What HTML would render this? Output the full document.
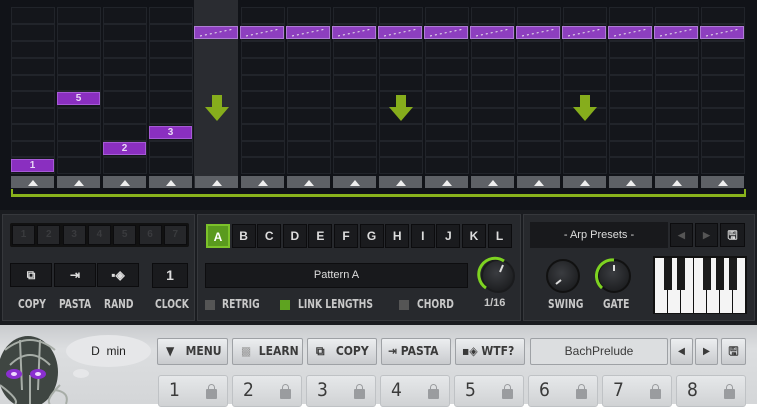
<!DOCTYPE html>
<html><head><meta charset="utf-8">
<style>
*{margin:0;padding:0;box-sizing:border-box}
body{width:768px;height:404px;overflow:hidden;background:#fff;position:relative;font-family:"Liberation Sans",sans-serif}
.a{position:absolute}
#top{left:0;top:0;width:757px;height:210px;background:#111318}
.cell{position:absolute;background:#14161b;border:1px solid #21242a}
.note{position:absolute;background:#8a2fc0;border:1px solid #a65ad6;color:#e8d8f5;font-size:10px;font-weight:bold;text-align:center;line-height:11px}
.step{position:absolute;background:#5e6166;height:12px;top:176px}
.step:after{content:"";position:absolute;left:50%;top:4px;margin-left:-5px;border-left:5px solid transparent;border-right:5px solid transparent;border-bottom:6px solid #eee}
.arrow{position:absolute;width:26px;height:26px}
#bot{left:0;top:210px;width:757px;height:115px;background:#1a1c20}
.pan{position:absolute;top:4px;height:107px;background:#27292d;border:1px solid #36383c}
.btn{position:absolute;background:#1a1b1e;border:1px solid #0c0c0e;color:#ddd;font-size:12px;font-weight:bold;text-align:center}
.lbl{position:absolute;color:#c8c8c8;font-size:12px;font-weight:bold;font-family:"DejaVu Sans Condensed","Liberation Sans",sans-serif;transform:scaleX(.85);transform-origin:left}
.chk{position:absolute;width:10px;height:10px;background:#555}
.knob{position:absolute;width:34px;height:34px;border-radius:50%;background:radial-gradient(circle at 45% 40%,#3a3c40,#141517);border:2px solid #111}
#lt{left:0;top:325px;width:757px;height:79px;background:linear-gradient(#c9cbce,#dcdee0 30%,#d4d6d8)}
.lb{position:absolute;top:338px;height:27px;background:linear-gradient(#eceef0,#c9cbce);border:1px solid #9ea1a5;border-radius:2px;color:#3a3a3a;font-size:12px;font-weight:bold;font-family:"DejaVu Sans Condensed","Liberation Sans",sans-serif;line-height:25px}
.tile{position:absolute;top:375px;width:70px;height:32px;background:linear-gradient(#e6e8ea,#d0d2d4);border:1px solid #bfc2c5;border-radius:3px;color:#3a3a3a;font-size:19px;font-family:"DejaVu Sans Condensed","Liberation Sans",sans-serif;padding:3px 0 0 10px}
.lock{position:absolute;right:10px;top:13px;width:11px;height:10px;background:#9a9c9f;border-radius:1px}
.lock:before{content:"";position:absolute;left:2px;top:-5px;width:5px;height:6px;border:1px solid #9a9c9f;border-bottom:none;border-radius:4px 4px 0 0}
</style></head><body>
<div id="top" class="a"></div>
<div class="a" style="left:194px;top:0;width:44px;height:188px;background:#2a2c31"></div>
<div id="grid"></div>
<div class="a" style="left:11px;top:194px;width:735px;height:3px;background:#8ab31c"></div>
<div class="a" style="left:11px;top:189px;width:2px;height:6px;background:#8ab31c"></div>
<div class="a" style="left:744px;top:189px;width:2px;height:6px;background:#8ab31c"></div>

<div id="bot" class="a">
 <div class="pan" style="left:2px;width:193px"></div>
 <div class="pan" style="left:197px;width:324px"></div>
 <div class="pan" style="left:523px;width:232px"></div>
</div>
<div class="a" style="left:10px;top:223px;width:179px;height:24px;background:#111;border-radius:2px"></div>
<div id="nums"></div>
<div class="btn" style="left:10px;top:263px;width:42px;height:24px;line-height:22px">⧉</div>
<div class="btn" style="left:54px;top:263px;width:42px;height:24px;line-height:22px">⇥</div>
<div class="btn" style="left:97px;top:263px;width:42px;height:24px;line-height:22px">▪◈</div>
<div class="btn" style="left:152px;top:263px;width:36px;height:25px;line-height:23px;font-size:14px">1</div>
<div class="lbl" style="left:18px;top:297px">COPY</div>
<div class="lbl" style="left:59px;top:297px">PASTA</div>
<div class="lbl" style="left:104px;top:297px">RAND</div>
<div class="lbl" style="left:155px;top:297px">CLOCK</div>

<div id="letters"></div>
<div class="a" style="left:205px;top:263px;width:263px;height:25px;background:#18191c;border:1px solid #0d0d0f;color:#ddd;font-size:11px;text-align:center;line-height:23px">Pattern A</div>
<div class="knob" style="left:481px;top:259px;border-color:#1a1b1d"></div>
<svg class="a" style="left:477px;top:255px" width="42" height="42"><path d="M9 33 A16 16 0 0 1 27 6" stroke="#7ed321" stroke-width="3" fill="none"/><line x1="23" y1="17" x2="26" y2="10" stroke="#ddd" stroke-width="2"/></svg>
<div class="lbl" style="left:484px;top:297px;font-family:'Liberation Sans';transform:none;font-size:11px">1/16</div>
<div class="chk" style="left:205px;top:300px"></div><div class="lbl" style="left:222px;top:297px">RETRIG</div>
<div class="chk" style="left:280px;top:300px;background:#5ea320"></div><div class="lbl" style="left:298px;top:297px">LINK LENGTHS</div>
<div class="chk" style="left:399px;top:300px"></div><div class="lbl" style="left:417px;top:297px">CHORD</div>

<div class="a" style="left:530px;top:222px;width:138px;height:26px;background:#18191c;color:#ddd;font-size:11px;text-align:center;line-height:26px">- Arp Presets -</div>
<div class="btn" style="left:670px;top:223px;width:23px;height:24px;color:#555;line-height:22px;font-size:9px">◀</div>
<div class="btn" style="left:695px;top:223px;width:23px;height:24px;color:#555;line-height:22px;font-size:9px">▶</div>
<div class="btn" style="left:720px;top:223px;width:25px;height:24px;line-height:22px;font-size:12px">🖫</div>
<div class="knob" style="left:546px;top:259px"></div>
<svg class="a" style="left:546px;top:259px" width="34" height="34"><line x1="10" y1="25" x2="15" y2="21" stroke="#ddd" stroke-width="2"/></svg>
<div class="knob" style="left:597px;top:259px"></div>
<svg class="a" style="left:593px;top:255px" width="42" height="42"><path d="M9 33 A16 16 0 0 1 21 5" stroke="#7ed321" stroke-width="3" fill="none"/><line x1="21" y1="16" x2="21" y2="10" stroke="#ddd" stroke-width="2"/></svg>
<div class="lbl" style="left:548px;top:297px">SWING</div>
<div class="lbl" style="left:603px;top:297px">GATE</div>
<div class="a" style="left:653px;top:256px;width:94px;height:58px;background:#111"></div>
<div id="piano"></div>

<div id="lt" class="a"></div>
<svg class="a" style="left:0;top:330px" width="75" height="74">
<ellipse cx="28" cy="42" rx="30" ry="36" fill="#3f4642"/>
<path d="M5 20 Q30 0 55 20 M10 35 Q30 15 50 35 M20 10 L22 60 M40 10 L38 60 M0 55 Q20 70 15 74 M60 55 Q45 70 50 74 M30 45 L30 74 M55 60 Q70 62 66 74" stroke="#a7ada7" stroke-width="2" fill="none"/>
<ellipse cx="14" cy="44" rx="8" ry="5" fill="#8a2fd0"/><ellipse cx="38" cy="44" rx="8" ry="5" fill="#8a2fd0"/>
<ellipse cx="14" cy="44" rx="3" ry="2" fill="#f0d8ff"/><ellipse cx="38" cy="44" rx="3" ry="2" fill="#f0d8ff"/>
</svg>
<div class="a" style="left:66px;top:335px;width:85px;height:32px;border-radius:50%;background:#e6e7e9;color:#222;font-size:12px;text-align:center;line-height:32px">D&nbsp; min</div>
<div class="a" style="left:73px;top:369px;width:16px;height:9px;border-radius:50%;background:#e6e7e9"></div>
<div class="lb" style="left:157px;width:71px;padding-left:8px">▼&nbsp;&nbsp;&nbsp;MENU</div>
<div class="lb" style="left:232px;width:71px;padding-left:8px"><span style="color:#999">▩</span>&nbsp;&nbsp;LEARN</div>
<div class="lb" style="left:307px;width:70px;padding-left:8px">⧉&nbsp;&nbsp;&nbsp;COPY</div>
<div class="lb" style="left:381px;width:70px;padding-left:6px">⇥&nbsp;PASTA</div>
<div class="lb" style="left:455px;width:70px;padding-left:6px">▪◈&nbsp;WTF?</div>
<div class="lb" style="left:530px;width:138px;text-align:center;font-family:'Liberation Sans';font-weight:normal;font-size:12px;background:#dcdee0">BachPrelude</div>
<div class="lb" style="left:670px;width:23px;text-align:center;font-size:10px">◀</div>
<div class="lb" style="left:695px;width:23px;text-align:center;font-size:10px">▶</div>
<div class="lb" style="left:721px;width:25px;text-align:center;font-size:12px">🖫</div>
<div id="tiles"></div>
<script>
let h='';
const rows=[7,24,41,58,75,91,108,124,141,157];
for(let c=0;c<16;c++){const x=11+c*46;
 for(let r=0;r<rows.length;r++){const t=rows[r];const hh=(r<rows.length-1?rows[r+1]:174)-t;
  if(c!=4)h+=`<div class="cell" style="left:${x}px;top:${t}px;width:44px;height:${hh}px"></div>`;}
 h+=`<div class="step" style="left:${x}px;width:43px"></div>`;
 if(c>=4)h+=`<div class="note" style="left:${x-1}px;top:26px;width:44px;height:13px;background:#8d3fbf;border-color:#b07cd6"><svg width="40" height="11"><path d="M4 9 L38 2" stroke="#eee" stroke-width="1" stroke-dasharray="2 3"/></svg></div>`;
}
[[0,159,'1'],[1,92,'5'],[2,142,'2'],[3,126,'3']].forEach(n=>{h+=`<div class="note" style="left:${11+n[0]*46}px;top:${n[1]}px;width:43px;height:13px">${n[2]}</div>`});
[4,8,12].forEach(c=>{const x=11+c*46+9;h+=`<svg class="arrow" style="left:${x}px;top:95px"><path d="M8 0 H18 V12 H25 L13 26 L1 12 H8 Z" fill="#86ad1c"/></svg>`});
document.getElementById('grid').innerHTML=h;
h='';for(let i=0;i<7;i++)h+=`<div class="btn" style="left:${12+i*25.3}px;top:225px;width:23px;height:20px;color:#3a3b3e;font-size:10px;line-height:18px;background:#26272a">${i+1}</div>`;
document.getElementById('nums').innerHTML=h;
h='';'ABCDEFGHIJKL'.split('').forEach((l,i)=>{h+=`<div class="btn" style="left:${206+i*25.6}px;top:224px;width:24px;height:24px;line-height:22px;${i==0?'background:#5a9a1e;border:2px solid #7cc22a;color:#fff':''}">${l}</div>`});
document.getElementById('letters').innerHTML=h;
h='';for(let i=0;i<7;i++)h+=`<div class="a" style="left:${655+i*13}px;top:258px;width:12px;height:55px;background:#f4f4f4"></div>`;
[0,1,3,4,5].forEach(i=>{h+=`<div class="a" style="left:${664+i*13}px;top:258px;width:8px;height:32px;background:#1a1a1a"></div>`});
document.getElementById('piano').innerHTML=h;
h='';for(let i=0;i<8;i++)h+=`<div class="tile" style="left:${158+i*74}px">${i+1}<div class="lock"></div></div>`;
document.getElementById('tiles').innerHTML=h;
</script>
</body></html>
